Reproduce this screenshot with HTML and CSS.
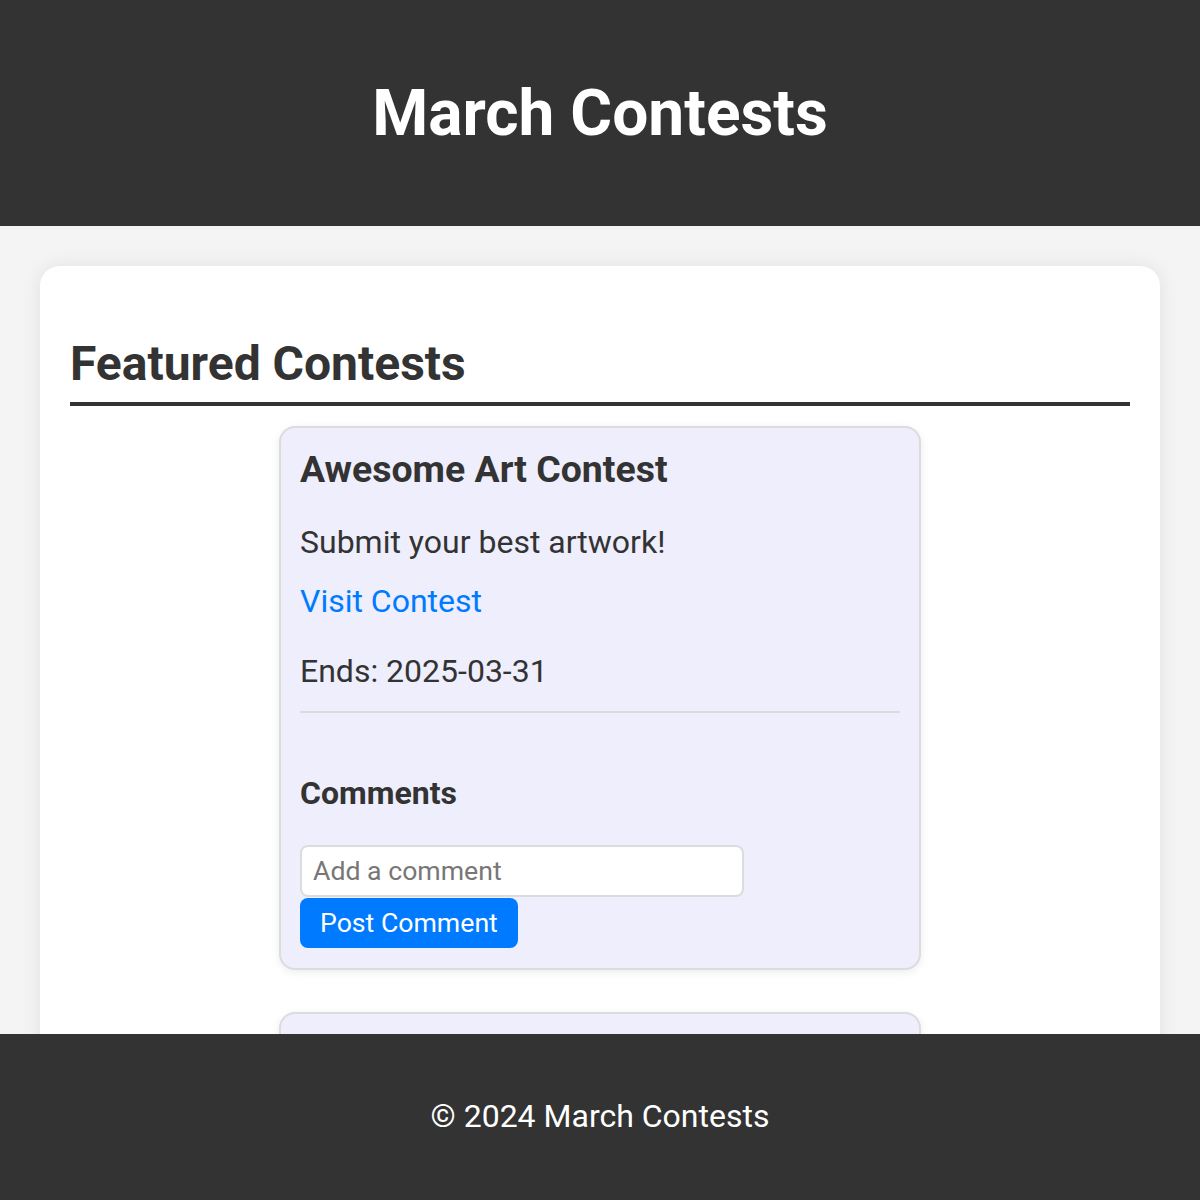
FILE: index.html
```html
<!DOCTYPE html>
<html lang="en">
<head>
<meta charset="utf-8">
<title>March Contests</title>
<link rel="stylesheet" href="styles.css">
</head>
<body>
<header class="site-header">
  <h1 class="site-title">March Contests</h1>
</header>
<main class="main">
  <section class="panel">
    <h2 class="panel-title">Featured Contests</h2>
    <article class="contest">
      <h3 class="contest-title">Awesome Art Contest</h3>
      <p class="contest-desc">Submit your best artwork!</p>
      <a class="contest-link" href="#">Visit Contest</a>
      <p class="contest-ends">Ends: 2025-03-31</p>
      <div class="comments">
        <h4 class="comments-title">Comments</h4>
        <form class="comment-form">
          <input class="comment-input" type="text" placeholder="Add a comment">
          <button class="comment-btn" type="button">Post Comment</button>
        </form>
      </div>
    </article>
    <article class="contest">
      <h3 class="contest-title">Photography Challenge</h3>
      <p class="contest-desc">Capture the spirit of spring!</p>
      <a class="contest-link" href="#">Visit Contest</a>
      <p class="contest-ends">Ends: 2025-03-28</p>
      <div class="comments">
        <h4 class="comments-title">Comments</h4>
        <form class="comment-form">
          <input class="comment-input" type="text" placeholder="Add a comment">
          <button class="comment-btn" type="button">Post Comment</button>
        </form>
      </div>
    </article>
  </section>
</main>
<footer class="site-footer">
  <p class="footer-text">© 2024 March Contests</p>
</footer>
</body>
</html>
```
FILE: styles.css
```css
* { box-sizing: border-box; }
html, body { margin: 0; padding: 0; }
body {
  font-family: Roboto, "Liberation Sans", Arial, sans-serif;
  background: #f4f4f4;
  color: #333;
  padding-bottom: 200px;
}
.site-header {
  background: #333;
  height: 226px;
  display: flex;
  align-items: center;
  justify-content: center;
}
.site-title {
  margin: 0;
  color: #fff;
  font-size: 64px;
  font-weight: 700;
  line-height: 1.172;
}
.main {
  padding: 40px;
}
.panel {
  background: #fff;
  border-radius: 20px;
  padding: 30px 30px 40px;
  box-shadow: 0 0 20px rgba(0,0,0,0.08);
}
.panel-title {
  margin: 40px 0 20px;
  padding-bottom: 10px;
  border-bottom: 4px solid #333;
  font-size: 48px;
  font-weight: 700;
  line-height: 1.172;
}
.contest {
  width: 642px;
  margin: 0 auto 42px;
  background: #eeeefc;
  border: 2px solid #dcdcdc;
  border-radius: 16px;
  padding: 20px 19px;
  box-shadow: 0 2px 8px rgba(0,0,0,0.08);
}
.contest-title {
  margin: 0 0 32px;
  font-size: 37.44px;
  font-weight: 700;
  line-height: 1.172;
}
.contest-desc {
  margin: 0 0 21px;
  font-size: 32px;
  line-height: 1.172;
}
.contest-link {
  display: block;
  color: #007bff;
  text-decoration: none;
  font-size: 32px;
  line-height: 1.172;
  margin-bottom: 33px;
}
.contest-ends {
  margin: 0 0 20px;
  font-size: 32px;
  line-height: 1.172;
}
.comments {
  border-top: 2px solid #dcdcdc;
  padding-top: 20px;
}
.comments-title {
  margin: 42px 0 33px;
  font-size: 32px;
  font-weight: 700;
  line-height: 1.172;
}
.comment-form {
  display: flex;
  flex-direction: column;
  align-items: flex-start;
  margin: 0;
}
.comment-input {
  width: 444px;
  height: 52px;
  padding: 0 11px;
  border: 2px solid #dcdcdc;
  border-radius: 8px;
  background: #fff;
  font-family: Roboto, "Liberation Sans", Arial, sans-serif;
  font-size: 26.67px;
  color: #333;
  margin-bottom: 1px;
}
.comment-input::placeholder { color: #777; }
.comment-btn {
  height: 50px;
  padding: 0 20px;
  border: none;
  border-radius: 8px;
  background: #007bff;
  color: #fff;
  font-family: Roboto, "Liberation Sans", Arial, sans-serif;
  font-size: 26.67px;
}
.site-footer {
  position: fixed;
  left: 0;
  right: 0;
  bottom: 0;
  height: 166px;
  background: #333;
  display: flex;
  align-items: center;
  justify-content: center;
}
.footer-text {
  margin: 0;
  color: #fff;
  font-size: 32px;
  line-height: 1.172;
}
```
